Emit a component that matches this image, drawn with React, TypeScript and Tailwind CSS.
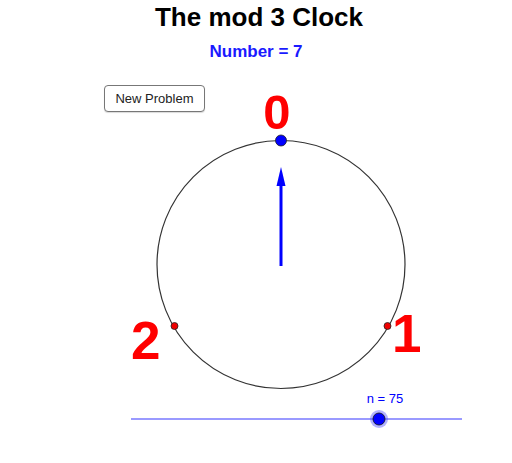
export default function App() {
  const cx = 281;
  const cy = 264.5;
  const r = 124;

  return (
    <div className="relative h-[463px] w-[512px] overflow-hidden bg-white font-['Liberation_Sans',Arial,sans-serif]">
      <svg className="absolute left-0 top-0" width={512} height={463} viewBox="0 0 512 463">
        <circle cx={cx} cy={cy} r={r} fill="none" stroke="#333" strokeWidth={1.2} />

        {/* arrow */}
        <line x1={cx} y1={266} x2={cx} y2={184} stroke="#0000ff" strokeWidth={3} />
        <polygon points={`${cx},167 ${cx - 4.5},186 ${cx + 4.5},186`} fill="#0000ff" />

        {/* points on the clock */}
        <circle cx={cx} cy={cy - r} r={5.5} fill="#0000ff" stroke="#222" strokeWidth={0.8} />
        <circle cx={387.5} cy={326} r={3.5} fill="#ee0000" stroke="#222" strokeWidth={0.8} />
        <circle cx={174.5} cy={326} r={3.5} fill="#ee0000" stroke="#222" strokeWidth={0.8} />

        <text x={277} y={129} textAnchor="middle" fontSize={49} fontWeight={700} fill="#ff0000" fontFamily="Liberation Sans, Arial, sans-serif">0</text>
        <text x={392} y={352} fontSize={53} fontWeight={700} fill="#ff0000" fontFamily="Liberation Sans, Arial, sans-serif">1</text>
        <text x={131} y={359} fontSize={53} fontWeight={700} fill="#ff0000" fontFamily="Liberation Sans, Arial, sans-serif">2</text>

        {/* slider */}
        <line x1={131} y1={419} x2={462} y2={419} stroke="#9a9aff" strokeWidth={2} />
        <circle cx={379} cy={419} r={9} fill="#5555ff" opacity={0.45} />
        <circle cx={379} cy={419} r={6} fill="#0000ff" stroke="#111" strokeWidth={0.8} />
        <text x={385} y={403} textAnchor="middle" fontSize={13} fill="#0000ff" fontFamily="Liberation Sans, Arial, sans-serif">n = 75</text>
      </svg>

      <div className="relative flex flex-col items-center">
        <h1 className="pl-[6px] pt-[4px] text-[26px] font-bold leading-[26px] text-black">The mod 3 Clock</h1>
        <p className="mt-[13px] text-[17px] font-bold leading-[17px] text-[#1a1aff]">Number = 7</p>
      </div>

      <button className="absolute left-[104px] top-[85px] flex h-[27px] w-[101px] items-center justify-center rounded-[4px] border border-[#777] bg-white text-[13px] text-[#222] shadow-[0_1px_1px_rgba(0,0,0,0.15)]">
        New Problem
      </button>
    </div>
  );
}
